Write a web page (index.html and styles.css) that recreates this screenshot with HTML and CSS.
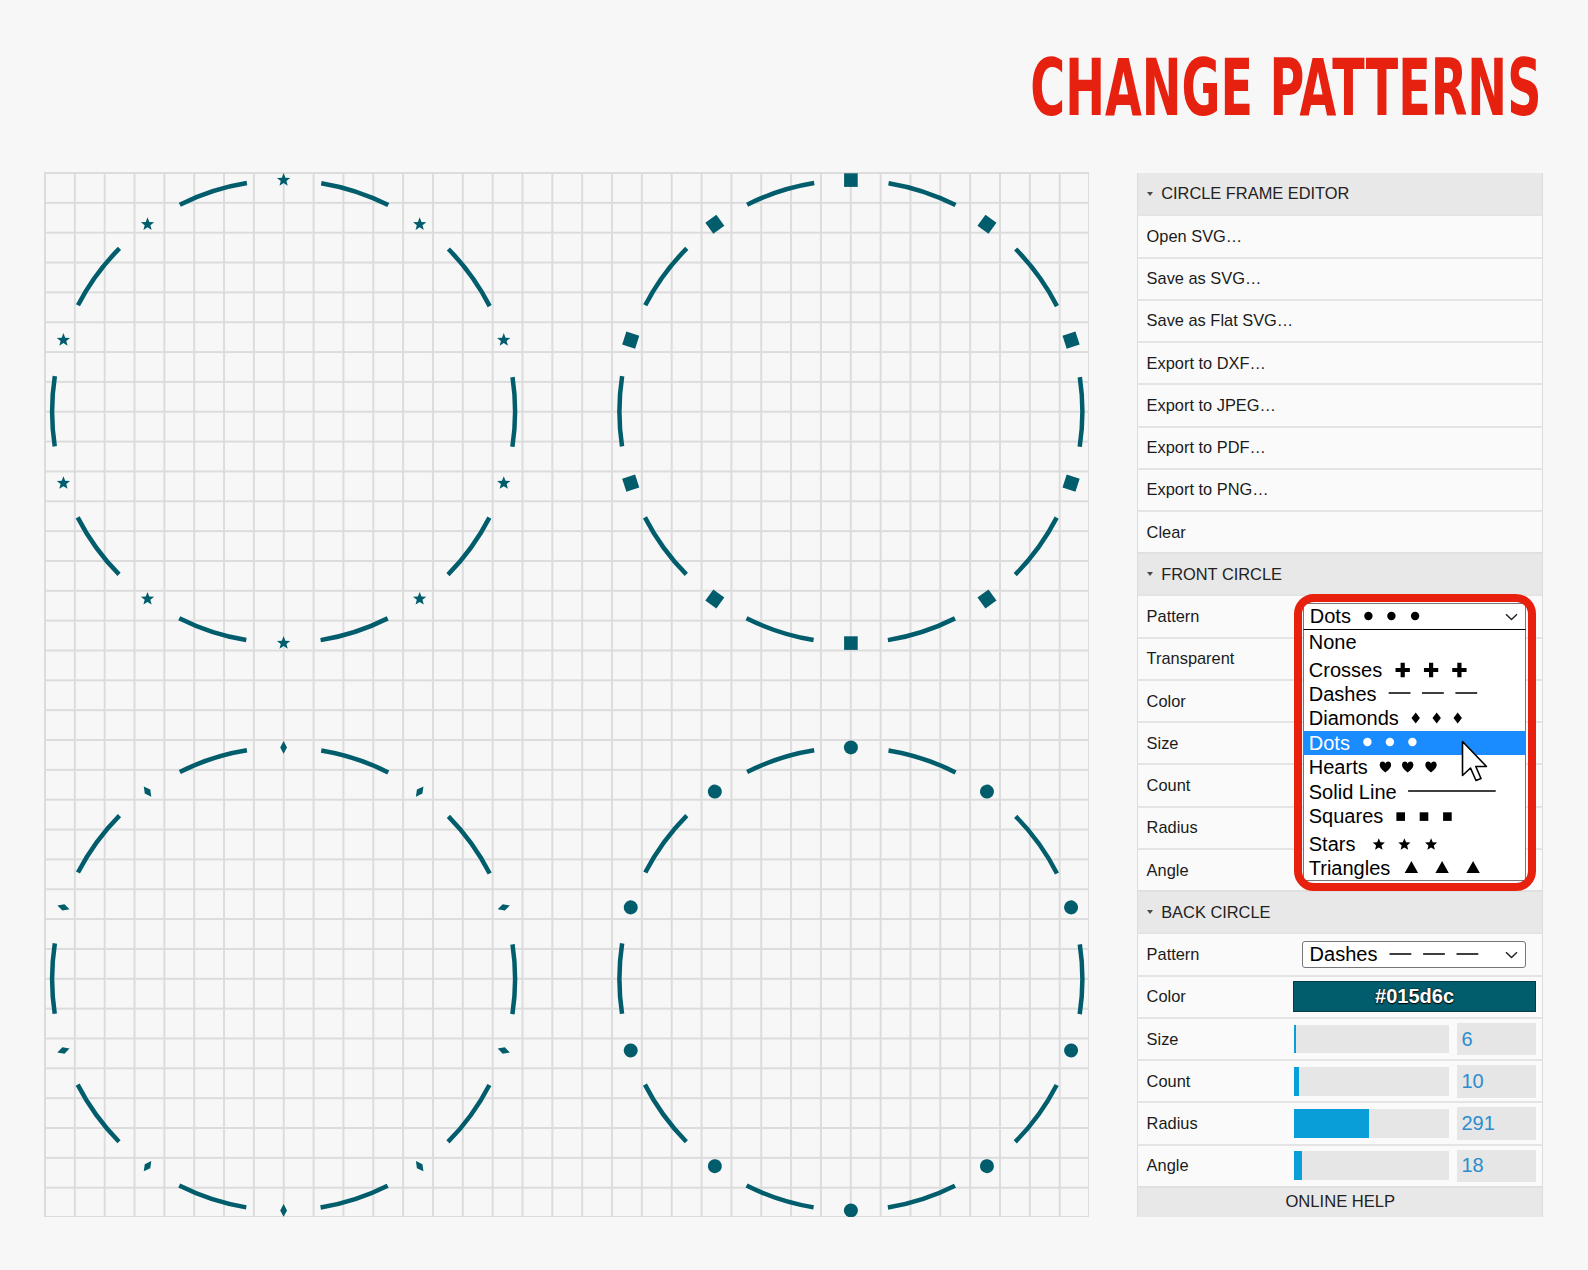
FILE: index.html
```html
<!DOCTYPE html>
<html lang="en">
<head>
<meta charset="utf-8">
<title>Change Patterns – Circle Frame Editor</title>
<link rel="stylesheet" href="styles.css">
</head>
<body>
<svg class="defs" width="0" height="0" aria-hidden="true">
  <defs>
    <path id="m-star" d="M0,-7L1.76,-2.43L6.66,-2.16L2.85,0.93L4.11,5.66L0,3L-4.11,5.66L-2.85,0.93L-6.66,-2.16L-1.76,-2.43Z"/>
    <rect id="m-square" x="-6.8" y="-6.8" width="13.6" height="13.6"/>
    <path id="m-diamond" d="M-6.4,0L0,-3.4L6.4,0L0,3.4Z"/>
    <circle id="m-dot" r="7"/>
    <path id="s-cross" d="M-7.15,-2.1H7.15V2.1H-7.15Z M-2.1,-7.15H2.1V7.15H-2.1Z"/>
    <rect id="s-dash" x="-10.9" y="-0.75" width="21.8" height="1.5"/>
    <path id="s-diamond" d="M0,-5.6L4.2,0L0,5.6L-4.2,0Z"/>
    <circle id="s-dot" r="4.2"/>
    <path id="s-heart" d="M0,5.6C-2,3.7 -5.7,1 -5.7,-2C-5.7,-4.2 -4.2,-5.4 -2.8,-5.4C-1.5,-5.4 -0.5,-4.6 0,-3.5C0.5,-4.6 1.5,-5.4 2.8,-5.4C4.2,-5.4 5.7,-4.2 5.7,-2C5.7,1 2,3.7 0,5.6Z"/>
    <rect id="s-square" x="-4.3" y="-4.3" width="8.6" height="8.6"/>
    <path id="s-star" d="M0,-6.4L1.66,-2.28L6.09,-1.98L2.68,0.87L3.76,5.18L0,2.82L-3.76,5.18L-2.68,0.87L-6.09,-1.98L-1.66,-2.28Z"/>
    <path id="s-tri" d="M0,-5.9L6.7,5.9H-6.7Z"/>
  </defs>
</svg>

<header class="top">
  <h1 class="title">CHANGE PATTERNS</h1>
</header>

<main class="main">
  <div class="canvas">
    <svg class="art" width="1045" height="1045" viewBox="0 0 1045 1045" fill="#015d6c">
      <g transform="translate(239.6 239.6)">
        <circle class="ring-path" r="231.5"/>
        <use href="#m-star" transform="rotate(-18) translate(231.5) rotate(18)"/>
        <use href="#m-star" transform="rotate(-54) translate(231.5) rotate(54)"/>
        <use href="#m-star" transform="rotate(-90) translate(231.5) rotate(90)"/>
        <use href="#m-star" transform="rotate(-126) translate(231.5) rotate(126)"/>
        <use href="#m-star" transform="rotate(-162) translate(231.5) rotate(162)"/>
        <use href="#m-star" transform="rotate(-198) translate(231.5) rotate(198)"/>
        <use href="#m-star" transform="rotate(-234) translate(231.5) rotate(234)"/>
        <use href="#m-star" transform="rotate(-270) translate(231.5) rotate(270)"/>
        <use href="#m-star" transform="rotate(-306) translate(231.5) rotate(306)"/>
        <use href="#m-star" transform="rotate(-342) translate(231.5) rotate(342)"/>
      </g>
      <g transform="translate(806.9 239.6)">
        <circle class="ring-path" r="231.5"/>
        <use href="#m-square" transform="rotate(-18) translate(231.5)"/>
        <use href="#m-square" transform="rotate(-54) translate(231.5)"/>
        <use href="#m-square" transform="rotate(-90) translate(231.5)"/>
        <use href="#m-square" transform="rotate(-126) translate(231.5)"/>
        <use href="#m-square" transform="rotate(-162) translate(231.5)"/>
        <use href="#m-square" transform="rotate(-198) translate(231.5)"/>
        <use href="#m-square" transform="rotate(-234) translate(231.5)"/>
        <use href="#m-square" transform="rotate(-270) translate(231.5)"/>
        <use href="#m-square" transform="rotate(-306) translate(231.5)"/>
        <use href="#m-square" transform="rotate(-342) translate(231.5)"/>
      </g>
      <g transform="translate(239.6 806.9)">
        <circle class="ring-path" r="231.5"/>
        <use href="#m-diamond" transform="rotate(-18) translate(231.5)"/>
        <use href="#m-diamond" transform="rotate(-54) translate(231.5)"/>
        <use href="#m-diamond" transform="rotate(-90) translate(231.5)"/>
        <use href="#m-diamond" transform="rotate(-126) translate(231.5)"/>
        <use href="#m-diamond" transform="rotate(-162) translate(231.5)"/>
        <use href="#m-diamond" transform="rotate(-198) translate(231.5)"/>
        <use href="#m-diamond" transform="rotate(-234) translate(231.5)"/>
        <use href="#m-diamond" transform="rotate(-270) translate(231.5)"/>
        <use href="#m-diamond" transform="rotate(-306) translate(231.5)"/>
        <use href="#m-diamond" transform="rotate(-342) translate(231.5)"/>
      </g>
      <g transform="translate(806.9 806.9)">
        <circle class="ring-path" r="231.5"/>
        <use href="#m-dot" transform="rotate(-18) translate(231.5)"/>
        <use href="#m-dot" transform="rotate(-54) translate(231.5)"/>
        <use href="#m-dot" transform="rotate(-90) translate(231.5)"/>
        <use href="#m-dot" transform="rotate(-126) translate(231.5)"/>
        <use href="#m-dot" transform="rotate(-162) translate(231.5)"/>
        <use href="#m-dot" transform="rotate(-198) translate(231.5)"/>
        <use href="#m-dot" transform="rotate(-234) translate(231.5)"/>
        <use href="#m-dot" transform="rotate(-270) translate(231.5)"/>
        <use href="#m-dot" transform="rotate(-306) translate(231.5)"/>
        <use href="#m-dot" transform="rotate(-342) translate(231.5)"/>
      </g>
    </svg>
  </div>

  <aside class="panel">
    <div class="sec"><span class="caret"></span>CIRCLE FRAME EDITOR</div>
    <div class="row">Open SVG…</div>
    <div class="row">Save as SVG…</div>
    <div class="row">Save as Flat SVG…</div>
    <div class="row">Export to DXF…</div>
    <div class="row">Export to JPEG…</div>
    <div class="row">Export to PDF…</div>
    <div class="row">Export to PNG…</div>
    <div class="row">Clear</div>

    <div class="sec"><span class="caret"></span>FRONT CIRCLE</div>
    <div class="row prop">
      <span class="lbl">Pattern</span>
      <div class="ctl">
        <div class="dd">
          <div class="dd-sel">
            <span class="val">Dots <svg class="sym" width="64" height="16" viewBox="0 0 64 16" fill="currentColor"><use href="#s-dot" x="12.4" y="8"/><use href="#s-dot" x="35.4" y="8"/><use href="#s-dot" x="59.1" y="8"/></svg></span>
            <svg class="chev" width="13" height="8" viewBox="0 0 13 8"><path d="M1 1.2L6.5 6.6L12 1.2"/></svg>
          </div>
          <ul class="dd-list">
            <li>None</li>
            <li class="tall">Crosses <svg class="sym" width="80" height="16" viewBox="0 0 80 16" fill="currentColor"><use href="#s-cross" x="14.7" y="8"/><use href="#s-cross" x="43.1" y="8"/><use href="#s-cross" x="71.4" y="8"/></svg></li>
            <li>Dashes <svg class="sym" width="96" height="16" viewBox="0 0 96 16" fill="currentColor"><use href="#s-dash" x="17.6" y="8"/><use href="#s-dash" x="50.9" y="8"/><use href="#s-dash" x="84.3" y="8"/></svg></li>
            <li>Diamonds <svg class="sym" width="60" height="16" viewBox="0 0 60 16" fill="currentColor"><use href="#s-diamond" x="11.7" y="8"/><use href="#s-diamond" x="32.7" y="8"/><use href="#s-diamond" x="53.7" y="8"/></svg></li>
            <li class="on">Dots <svg class="sym" width="63" height="16" viewBox="0 0 63 16" fill="currentColor"><use href="#s-dot" x="12.4" y="8"/><use href="#s-dot" x="34.9" y="8"/><use href="#s-dot" x="57.4" y="8"/></svg></li>
            <li>Hearts <svg class="sym" width="65" height="16" viewBox="0 0 65 16" fill="currentColor"><use href="#s-heart" x="12.4" y="8"/><use href="#s-heart" x="34.7" y="8"/><use href="#s-heart" x="58" y="8"/></svg></li>
            <li>Solid Line <svg class="sym" width="95" height="16" viewBox="0 0 95 16" fill="currentColor"><rect x="6.1" y="7.25" width="87.6" height="1.5"/></svg></li>
            <li>Squares <svg class="sym" width="64" height="16" viewBox="0 0 64 16" fill="currentColor"><use href="#s-square" x="11.7" y="8.6"/><use href="#s-square" x="35" y="8.6"/><use href="#s-square" x="58.4" y="8.6"/></svg></li>
            <li class="tall">Stars <svg class="sym" width="76" height="16" viewBox="0 0 76 16" fill="currentColor"><use href="#s-star" x="17.8" y="8.6"/><use href="#s-star" x="43.4" y="8.6"/><use href="#s-star" x="70.1" y="8.6"/></svg></li>
            <li>Triangles <svg class="sym" width="84" height="16" viewBox="0 0 84 16" fill="currentColor"><use href="#s-tri" x="15.4" y="8"/><use href="#s-tri" x="46.1" y="8"/><use href="#s-tri" x="77.1" y="8"/></svg></li>
          </ul>
          <div class="highlight-ring"></div>
          <svg class="cursor" width="27" height="42" viewBox="-1.5 -1.5 27 42"><path d="M0 0V34L8 26.5L13.5 39L18.5 37L13.3 25H24Z"/></svg>
        </div>
      </div>
    </div>
    <div class="row prop"><span class="lbl">Transparent</span></div>
    <div class="row prop"><span class="lbl">Color</span></div>
    <div class="row prop"><span class="lbl">Size</span></div>
    <div class="row prop"><span class="lbl">Count</span></div>
    <div class="row prop"><span class="lbl">Radius</span></div>
    <div class="row prop"><span class="lbl">Angle</span></div>

    <div class="sec"><span class="caret"></span>BACK CIRCLE</div>
    <div class="row prop">
      <span class="lbl">Pattern</span>
      <div class="ctl">
        <div class="select">
          <span class="val">Dashes <svg class="sym" width="96" height="16" viewBox="0 0 96 16" fill="currentColor"><use href="#s-dash" x="17.4" y="8"/><use href="#s-dash" x="51" y="8"/><use href="#s-dash" x="84.4" y="8"/></svg></span>
          <svg class="chev" width="13" height="8" viewBox="0 0 13 8"><path d="M1 1.2L6.5 6.6L12 1.2"/></svg>
        </div>
      </div>
    </div>
    <div class="row prop">
      <span class="lbl">Color</span>
      <div class="ctl"><div class="swatch">#015d6c</div></div>
    </div>
    <div class="row prop">
      <span class="lbl">Size</span>
      <div class="ctl"><div class="slider"><div class="fill" style="width:2.3px"></div></div><div class="num">6</div></div>
    </div>
    <div class="row prop">
      <span class="lbl">Count</span>
      <div class="ctl"><div class="slider"><div class="fill" style="width:4.7px"></div></div><div class="num">10</div></div>
    </div>
    <div class="row prop">
      <span class="lbl">Radius</span>
      <div class="ctl"><div class="slider"><div class="fill" style="width:74.7px"></div></div><div class="num">291</div></div>
    </div>
    <div class="row prop">
      <span class="lbl">Angle</span>
      <div class="ctl"><div class="slider"><div class="fill" style="width:8.3px"></div></div><div class="num">18</div></div>
    </div>
    <div class="help">ONLINE HELP</div>
  </aside>
</main>
</body>
</html>
```

FILE: styles.css
```css
* { box-sizing: border-box; margin: 0; padding: 0; }

html, body { background: #f7f7f7; }

body {
  width: 1588px;
  height: 1270px;
  overflow: hidden;
  font-family: "Liberation Sans", Arial, sans-serif;
  color: #1b1b1b;
}

.defs { position: absolute; width: 0; height: 0; overflow: hidden; }

/* ---------- title ---------- */
.top {
  height: 172.3px;
  display: flex;
  justify-content: flex-end;
  align-items: flex-start;
  padding-right: 47px;
}

.title {
  margin-top: 48.6px;
  font-family: "DejaVu Sans Condensed", "Liberation Sans", sans-serif;
  font-weight: 700;
  font-size: 78.5px;
  line-height: 78.5px;
  color: #e7210f;
  white-space: nowrap;
  transform: scaleX(0.673);
  transform-origin: right center;
}

/* ---------- layout ---------- */
.main {
  display: flex;
  align-items: flex-start;
  gap: 48px;
  padding-left: 44.3px;
}

/* ---------- canvas ---------- */
.canvas {
  width: 1045px;
  height: 1045px;
  flex: none;
  background-color: #f7f7f7;
  background-image:
    linear-gradient(to right, #dcdcdc 1.5px, transparent 1.5px),
    linear-gradient(to bottom, #dcdcdc 1.5px, transparent 1.5px);
  background-size: 29.857px 29.857px;
  border-right: 1.5px solid #dcdcdc;
  border-bottom: 1.5px solid #dcdcdc;
}

.art { display: block; }

.ring-path {
  fill: none;
  stroke: #015d6c;
  stroke-width: 4.5;
  stroke-dasharray: 70.72 74.74;
  stroke-dashoffset: 35.36;
}

/* ---------- panel ---------- */
.panel {
  width: 406px;
  flex: none;
  margin-top: 1px;
  background: #fafafa;
  border-left: 1.5px solid #dcdcdc;
  border-right: 1.5px solid #dcdcdc;
  font-size: 16.4px;
}

.sec {
  height: 42.2px;
  display: flex;
  align-items: center;
  padding-left: 8.5px;
  background: #e8e8e8;
  border-top: 2px solid #e0e0e0;
  color: #222;
}

.sec:first-child { border-top: 0; height: 41px; }

.caret {
  width: 0;
  height: 0;
  border-left: 3.6px solid transparent;
  border-right: 3.6px solid transparent;
  border-top: 4.6px solid #4a4a4a;
  margin-right: 8.4px;
}

.row {
  height: 42.25px;
  display: flex;
  align-items: center;
  padding-left: 8.3px;
  border-top: 2px solid #e4e4e4;
}

.prop {
  display: grid;
  grid-template-columns: 146.7px 1fr;
  align-items: center;
  padding-right: 5.8px;
}

.ctl {
  display: flex;
  align-items: center;
  gap: 8.3px;
}

.val { white-space: nowrap; }

.sym { vertical-align: -0.84px; }

.chev { flex: none; margin-left: auto; }
.chev path { fill: none; stroke: #222; stroke-width: 1.4; }

/* select (closed) */
.select {
  margin-left: 8.8px;
  width: 224.4px;
  height: 27.6px;
  display: flex;
  align-items: center;
  padding: 0 7px 0 6.5px;
  background: #fff;
  border: 1.2px solid #767676;
  border-radius: 3px;
  font-size: 20px;
  color: #000;
}

/* open dropdown */
.dd {
  position: relative;
  margin-left: 9.5px;
  width: 223px;
  font-size: 20px;
  color: #000;
}

.dd-sel {
  height: 27px;
  display: flex;
  align-items: center;
  padding: 0 7px 0 6px;
  background: #fff;
  border: 1px solid #767676;
  border-bottom: 1.5px solid #000;
}

.dd-list {
  position: absolute;
  top: 100%;
  left: 0;
  right: 0;
  list-style: none;
  background: #fff;
  border: 1px solid #767676;
  border-top: 0;
  z-index: 2;
}

.dd-list li {
  height: 24.5px;
  line-height: 25px;
  padding-left: 5px;
  white-space: nowrap;
}

.dd-list li.tall { height: 27px; padding-top: 3.5px; }

.dd-list li.on { background: #1a8cff; color: #fff; }

.highlight-ring {
  position: absolute;
  left: -8.6px;
  top: -9.6px;
  right: -10.5px;
  height: 297px;
  border: 8.5px solid #e8210f;
  border-radius: 20px;
  z-index: 3;
  pointer-events: none;
}

.cursor {
  position: absolute;
  left: 158.2px;
  top: 136.6px;
  z-index: 4;
}
.cursor path { fill: #fff; stroke: #000; stroke-width: 1.6; stroke-linejoin: round; }

/* colour swatch */
.swatch {
  width: 242.5px;
  height: 31.3px;
  display: flex;
  align-items: center;
  justify-content: center;
  background: #015d6c;
  border: 1px solid #0a3a44;
  color: #fff;
  font-weight: 700;
  font-size: 20px;
  text-shadow: 0 0 2px #000, 0 1px 1px #000;
}

/* sliders */
.slider {
  width: 154.7px;
  height: 28.7px;
  margin-left: 0.8px;
  background: #e6e6e6;
}

.fill { height: 100%; background: #0a9ed8; }

.num {
  width: 78.7px;
  height: 32.5px;
  display: flex;
  align-items: center;
  padding-left: 4.4px;
  background: #e6e6e6;
  color: #2d8dcd;
  font-size: 20px;
}

.help {
  height: 31px;
  display: flex;
  align-items: center;
  justify-content: center;
  background: #e8e8e8;
  border-top: 2px solid #e0e0e0;
  font-size: 16.6px;
  color: #222;
}
```
